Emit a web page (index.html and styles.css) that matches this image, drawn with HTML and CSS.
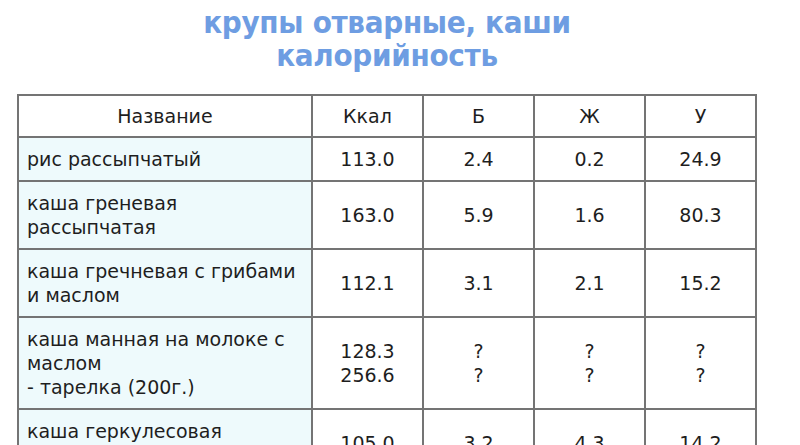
FILE: index.html
```html
<!DOCTYPE html>
<html lang="ru">
<head>
<meta charset="utf-8">
<link rel="stylesheet" href="styles.css">
</head>
<body>
<div class="page">
  <h1 class="title">крупы отварные, каши<br>калорийность</h1>
  <table class="kcal">
    <colgroup>
      <col class="c-name"><col class="c-num"><col class="c-num"><col class="c-num"><col class="c-num">
    </colgroup>
    <thead>
      <tr><th>Название</th><th>Ккал</th><th>Б</th><th>Ж</th><th>У</th></tr>
    </thead>
    <tbody>
      <tr><td class="name">рис рассыпчатый</td><td>113.0</td><td>2.4</td><td>0.2</td><td>24.9</td></tr>
      <tr><td class="name">каша греневая<br>рассыпчатая</td><td>163.0</td><td>5.9</td><td>1.6</td><td>80.3</td></tr>
      <tr><td class="name">каша гречневая с грибами и маслом</td><td>112.1</td><td>3.1</td><td>2.1</td><td>15.2</td></tr>
      <tr><td class="name">каша манная на молоке с маслом<br>- тарелка (200г.)</td><td>128.3<br>256.6</td><td>?<br>?</td><td>?<br>?</td><td>?<br>?</td></tr>
      <tr><td class="name">каша геркулесовая<br>на молоке</td><td>105.0</td><td>3.2</td><td>4.3</td><td>14.2</td></tr>
    </tbody>
  </table>
</div>
</body>
</html>
```

FILE: styles.css
```css
html, body {
  margin: 0;
  padding: 0;
  background: #ffffff;
}
.page {
  width: 774px;
  padding-top: 6px;
}
.title {
  margin: 0 0 22px 0;
  text-align: center;
  font-family: "Liberation Sans Narrow", "DejaVu Sans Condensed", "Liberation Sans", sans-serif;
  font-weight: bold;
  font-size: 31px;
  letter-spacing: -0.3px;
  line-height: 33px;
  color: #6e9de2;
}
.kcal {
  margin-left: 17px;
  width: 740px;
  border-collapse: collapse;
  border: 2px solid #747474;
  font-family: "DejaVu Sans", Verdana, sans-serif;
  font-size: 19px;
  color: #1e1e1e;
}
.c-name { width: 294px; }
.c-num { width: 111px; }
.kcal th, .kcal td {
  border: 2px solid #747474;
  padding: 9px 8px;
  line-height: 24px;
  text-align: center;
  font-weight: normal;
  vertical-align: middle;
}
.kcal th {
  background: #ffffff;
  padding: 8px 8px;
}
.kcal td.name {
  text-align: left;
  background: #eefafc;
}
```
